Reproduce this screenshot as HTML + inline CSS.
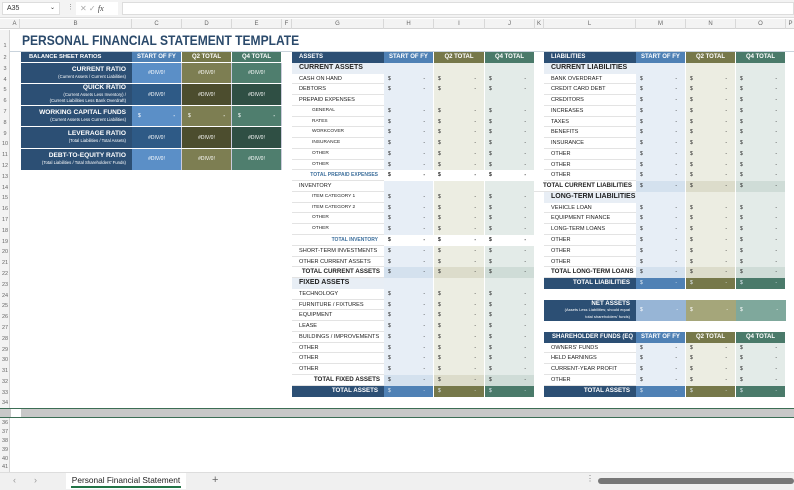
<!DOCTYPE html><html><head><meta charset="utf-8"><style>
*{margin:0;padding:0;box-sizing:border-box}
body{width:794px;height:490px;overflow:hidden;background:#fff;font-family:"Liberation Sans",sans-serif;position:relative}
q::before,q::after{content:none!important}
s{text-decoration:none}
.abs{position:absolute}
#top{left:0;top:0;width:794px;height:18px;background:#f3f3f3;border-bottom:1px solid #ddd}
#colh{left:0;top:19px;width:794px;height:10px;background:#f3f3f3;border-bottom:1px solid #d4d4d4}
#colh span{position:absolute;top:0;font-size:6px;color:#666;text-align:center;line-height:10px;border-right:1px solid #d8d8d8;height:10px}
#rowh{left:0;top:30px;width:10px;height:442px;background:#f3f3f3;border-right:1px solid #d4d4d4}
#rowh span{position:absolute;left:0;width:10px;font-size:5.5px;color:#666;text-align:center}
.title{left:22px;top:32px;font-size:14px;font-weight:bold;color:#2b4a6b;transform:scaleX(0.86);transform-origin:left top;white-space:nowrap}
.hl{left:10px;top:51px;width:784px;height:1px;background:#c9d3dc}
.pan{position:absolute;top:52px}
.r{display:flex;height:10.78px;font-size:5.6px;color:#222;line-height:10.78px}
.r>span{flex:none;padding-left:7px;white-space:nowrap;overflow:hidden;border-bottom:1px solid #e3e3e3}
.r>q{flex:none;display:flex;justify-content:space-between;padding:0 8px 0 4px;font-size:5px;border-right:1px solid #fff;quotes:none}
.r>q:nth-of-type(1){background:#e7eef6}.r>q:nth-of-type(2){background:#ecede2}.r>q:nth-of-type(3){background:#e3ebe8}
.h>span{background:#2c4f74;color:#fff;font-weight:bold;font-size:6px;border:0}
.h>q{color:#fff;font-weight:bold;font-size:6px;justify-content:center;padding:0}
.h>q:nth-of-type(1){background:#4f81b5}.h>q:nth-of-type(2){background:#76784a}.h>q:nth-of-type(3){background:#4a7a6a}
.sec>span{font-weight:bold;font-size:7px;background:#e8eef5;border:0}
.sub>span{padding-left:20px;font-size:4.8px}
.tp>span{color:#3d6f9c;font-weight:bold;font-size:5px;text-align:right;padding-right:6px}
.tp>q{background:#fff!important;font-weight:bold}
.tot>span{font-weight:bold;font-size:6.2px;text-align:right;padding-right:4px}
.tot>q:nth-of-type(1){background:#d4e1ee}.tot>q:nth-of-type(2){background:#dcdccb}.tot>q:nth-of-type(3){background:#cfdcd7}
.dk>span{background:#2c4f74;color:#fff;font-weight:bold;font-size:6.2px;text-align:right;padding-right:6px;border:0}
.dk>q{color:#dfe8f0}
.dk>q:nth-of-type(1){background:#4f81b5}.dk>q:nth-of-type(2){background:#76784a}.dk>q:nth-of-type(3){background:#4a7a6a}
.e{height:10.78px}
#rat{left:21px;top:52px;width:261px}
.rb{display:flex;height:21.56px;border-bottom:1px solid #fff}
.rb>span{width:111px;background:#2c4f74;color:#fff;text-align:right;padding-right:6px;font-size:6.6px;font-weight:bold;line-height:8px;padding-top:3px}
.rb>span i{display:block;font-style:normal;font-weight:normal;font-size:4.3px;line-height:6px}
.rb>q{width:50px;border-right:1px solid #ccd;color:#fff;font-size:5px;display:flex;align-items:center;justify-content:center;quotes:none}
.c1{background:#5b8fc7}.c2{background:#7d7e52}.c3{background:#4f7e6e}
.d1{background:#2e5a86}.d2{background:#4c4d2e}.d3{background:#2f4f44}
#ga .r>span{width:92px}#ga .r>q{width:50px}#ga .r>q:nth-of-type(2){width:51px}#la .r>span{width:92px}#la .r>q{width:50px}
</style></head><body>
<div id="top" class="abs">
 <div class="abs" style="left:2px;top:2px;width:58px;height:13px;background:#fff;border:1px solid #ddd;font-size:7px;line-height:11px;padding-left:4px;color:#333">A35<span style="position:absolute;right:4px;font-size:6px">&#8964;</span></div>
 <div class="abs" style="left:67px;top:3px;font-size:7px;color:#888">&#8942;</div>
 <div class="abs" style="left:76px;top:2px;width:42px;height:13px;background:#fff;font-size:8px;color:#aaa;line-height:13px;padding-left:4px">&#10005; &#10003; <i style="color:#444;font-family:'Liberation Serif',serif">fx</i></div>
 <div class="abs" style="left:122px;top:2px;width:672px;height:13px;background:#fff;border:1px solid #ddd"></div>
</div>
<div id="colh" class="abs">
<span style="left:10px;width:10px">A</span><span style="left:20px;width:112px">B</span><span style="left:132px;width:50px">C</span><span style="left:182px;width:50px">D</span><span style="left:232px;width:50px">E</span><span style="left:282px;width:10px">F</span><span style="left:292px;width:92px">G</span><span style="left:384px;width:50px">H</span><span style="left:434px;width:51px">I</span><span style="left:485px;width:50px">J</span><span style="left:535px;width:9px">K</span><span style="left:544px;width:92px">L</span><span style="left:636px;width:50px">M</span><span style="left:686px;width:50px">N</span><span style="left:736px;width:50px">O</span><span style="left:786px;width:10px">P</span>
</div>
<div id="rowh" class="abs">
<span style="top:13px">1</span><span style="top:25px">2</span><span style="top:36px">3</span><span style="top:47px">4</span><span style="top:57px">5</span><span style="top:68px">6</span><span style="top:79px">7</span><span style="top:90px">8</span><span style="top:101px">9</span><span style="top:111px">10</span><span style="top:122px">11</span><span style="top:133px">12</span><span style="top:144px">13</span><span style="top:155px">14</span><span style="top:165px">15</span><span style="top:176px">16</span><span style="top:187px">17</span><span style="top:198px">18</span><span style="top:209px">19</span><span style="top:219px">20</span><span style="top:230px">21</span><span style="top:241px">22</span><span style="top:252px">23</span><span style="top:263px">24</span><span style="top:273px">25</span><span style="top:284px">26</span><span style="top:295px">27</span><span style="top:306px">28</span><span style="top:317px">29</span><span style="top:327px">30</span><span style="top:338px">31</span><span style="top:349px">32</span><span style="top:360px">33</span><span style="top:370px">34</span><span style="top:380px;color:#217346">35</span><span style="top:390px">36</span><span style="top:399px">37</span><span style="top:408px">38</span><span style="top:417px">39</span><span style="top:426px">40</span><span style="top:434px">41</span>
</div>
<div class="abs title">PERSONAL FINANCIAL STATEMENT TEMPLATE</div>
<div class="abs hl"></div>

<div id="rat" class="abs">
 <div class="r h" style="border-bottom:1px solid #fff"><span style="width:111px;padding-left:8px;font-size:5.8px">BALANCE SHEET RATIOS</span><q style="width:50px">START OF FY</q><q style="width:50px">Q2 TOTAL</q><q style="width:50px">Q4 TOTAL</q></div>
 <div class="rb"><span>CURRENT RATIO<i>(Current Assets / Current Liabilities)</i></span><q class="c1">#DIV/0!</q><q class="c2">#DIV/0!</q><q class="c3">#DIV/0!</q></div>
 <div class="rb"><span style="padding-top:0">QUICK RATIO<i>(Current Assets Less Inventory) /</i><i>(Current Liabilities Less Bank Overdraft)</i></span><q class="d1">#DIV/0!</q><q class="d2">#DIV/0!</q><q class="d3">#DIV/0!</q></div>
 <div class="rb"><span>WORKING CAPITAL FUNDS<i>(Current Assets Less Current Liabilities)</i></span><q class="c1" style="justify-content:space-between;padding:0 6px">$<b>-</b></q><q class="c2" style="justify-content:space-between;padding:0 6px">$<b>-</b></q><q class="c3" style="justify-content:space-between;padding:0 6px">$<b>-</b></q></div>
 <div class="rb"><span>LEVERAGE RATIO<i>(Total Liabilities / Total Assets)</i></span><q class="d1">#DIV/0!</q><q class="d2">#DIV/0!</q><q class="d3">#DIV/0!</q></div>
 <div class="rb"><span>DEBT-TO-EQUITY RATIO<i>(Total Liabilities / Total Shareholders' Funds)</i></span><q class="c1">#DIV/0!</q><q class="c2">#DIV/0!</q><q class="c3">#DIV/0!</q></div>
</div>

<div id="ga" class="pan" style="left:292px;width:243px">
<div class="r h"><span>ASSETS</span><q>START OF FY</q><q>Q2 TOTAL</q><q>Q4 TOTAL</q></div>
<div class="r sec"><span>CURRENT ASSETS</span><q></q><q></q><q></q></div>
<div class="r"><span>CASH ON HAND</span><q>$<s>-</s></q><q>$<s>-</s></q><q>$<s>-</s></q></div>
<div class="r"><span>DEBTORS</span><q>$<s>-</s></q><q>$<s>-</s></q><q>$<s>-</s></q></div>
<div class="r"><span>PREPAID EXPENSES</span><q></q><q></q><q></q></div>
<div class="r sub"><span>GENERAL</span><q>$<s>-</s></q><q>$<s>-</s></q><q>$<s>-</s></q></div>
<div class="r sub"><span>RATES</span><q>$<s>-</s></q><q>$<s>-</s></q><q>$<s>-</s></q></div>
<div class="r sub"><span>WORKCOVER</span><q>$<s>-</s></q><q>$<s>-</s></q><q>$<s>-</s></q></div>
<div class="r sub"><span>INSURANCE</span><q>$<s>-</s></q><q>$<s>-</s></q><q>$<s>-</s></q></div>
<div class="r sub"><span>OTHER</span><q>$<s>-</s></q><q>$<s>-</s></q><q>$<s>-</s></q></div>
<div class="r sub"><span>OTHER</span><q>$<s>-</s></q><q>$<s>-</s></q><q>$<s>-</s></q></div>
<div class="r tp"><span>TOTAL PREPAID EXPENSES</span><q>$<s>-</s></q><q>$<s>-</s></q><q>$<s>-</s></q></div>
<div class="r"><span>INVENTORY</span><q></q><q></q><q></q></div>
<div class="r sub"><span>ITEM CATEGORY 1</span><q>$<s>-</s></q><q>$<s>-</s></q><q>$<s>-</s></q></div>
<div class="r sub"><span>ITEM CATEGORY 2</span><q>$<s>-</s></q><q>$<s>-</s></q><q>$<s>-</s></q></div>
<div class="r sub"><span>OTHER</span><q>$<s>-</s></q><q>$<s>-</s></q><q>$<s>-</s></q></div>
<div class="r sub"><span>OTHER</span><q>$<s>-</s></q><q>$<s>-</s></q><q>$<s>-</s></q></div>
<div class="r tp"><span>TOTAL INVENTORY</span><q>$<s>-</s></q><q>$<s>-</s></q><q>$<s>-</s></q></div>
<div class="r"><span>SHORT-TERM INVESTMENTS</span><q>$<s>-</s></q><q>$<s>-</s></q><q>$<s>-</s></q></div>
<div class="r"><span>OTHER CURRENT ASSETS</span><q>$<s>-</s></q><q>$<s>-</s></q><q>$<s>-</s></q></div>
<div class="r tot"><span>TOTAL CURRENT ASSETS</span><q>$<s>-</s></q><q>$<s>-</s></q><q>$<s>-</s></q></div>
<div class="r sec"><span>FIXED ASSETS</span><q></q><q></q><q></q></div>
<div class="r"><span>TECHNOLOGY</span><q>$<s>-</s></q><q>$<s>-</s></q><q>$<s>-</s></q></div>
<div class="r"><span>FURNITURE / FIXTURES</span><q>$<s>-</s></q><q>$<s>-</s></q><q>$<s>-</s></q></div>
<div class="r"><span>EQUIPMENT</span><q>$<s>-</s></q><q>$<s>-</s></q><q>$<s>-</s></q></div>
<div class="r"><span>LEASE</span><q>$<s>-</s></q><q>$<s>-</s></q><q>$<s>-</s></q></div>
<div class="r"><span>BUILDINGS / IMPROVEMENTS</span><q>$<s>-</s></q><q>$<s>-</s></q><q>$<s>-</s></q></div>
<div class="r"><span>OTHER</span><q>$<s>-</s></q><q>$<s>-</s></q><q>$<s>-</s></q></div>
<div class="r"><span>OTHER</span><q>$<s>-</s></q><q>$<s>-</s></q><q>$<s>-</s></q></div>
<div class="r"><span>OTHER</span><q>$<s>-</s></q><q>$<s>-</s></q><q>$<s>-</s></q></div>
<div class="r tot"><span>TOTAL FIXED ASSETS</span><q>$<s>-</s></q><q>$<s>-</s></q><q>$<s>-</s></q></div>
<div class="r dk"><span>TOTAL ASSETS</span><q>$<s>-</s></q><q>$<s>-</s></q><q>$<s>-</s></q></div>
</div>

<div id="la" class="pan" style="left:544px;width:242px">
<div class="r h"><span>LIABILITIES</span><q>START OF FY</q><q>Q2 TOTAL</q><q>Q4 TOTAL</q></div>
<div class="r sec"><span>CURRENT LIABILITIES</span><q></q><q></q><q></q></div>
<div class="r"><span>BANK OVERDRAFT</span><q>$<s>-</s></q><q>$<s>-</s></q><q>$<s>-</s></q></div>
<div class="r"><span>CREDIT CARD DEBT</span><q>$<s>-</s></q><q>$<s>-</s></q><q>$<s>-</s></q></div>
<div class="r"><span>CREDITORS</span><q>$<s>-</s></q><q>$<s>-</s></q><q>$<s>-</s></q></div>
<div class="r"><span>INCREASES</span><q>$<s>-</s></q><q>$<s>-</s></q><q>$<s>-</s></q></div>
<div class="r"><span>TAXES</span><q>$<s>-</s></q><q>$<s>-</s></q><q>$<s>-</s></q></div>
<div class="r"><span>BENEFITS</span><q>$<s>-</s></q><q>$<s>-</s></q><q>$<s>-</s></q></div>
<div class="r"><span>INSURANCE</span><q>$<s>-</s></q><q>$<s>-</s></q><q>$<s>-</s></q></div>
<div class="r"><span>OTHER</span><q>$<s>-</s></q><q>$<s>-</s></q><q>$<s>-</s></q></div>
<div class="r"><span>OTHER</span><q>$<s>-</s></q><q>$<s>-</s></q><q>$<s>-</s></q></div>
<div class="r"><span>OTHER</span><q>$<s>-</s></q><q>$<s>-</s></q><q>$<s>-</s></q></div>
<div class="r tot"><span style="overflow:visible;margin-left:-10px;width:102px!important">TOTAL CURRENT LIABILITIES</span><q>$<s>-</s></q><q>$<s>-</s></q><q>$<s>-</s></q></div>
<div class="r sec"><span>LONG-TERM LIABILITIES</span><q></q><q></q><q></q></div>
<div class="r"><span>VEHICLE LOAN</span><q>$<s>-</s></q><q>$<s>-</s></q><q>$<s>-</s></q></div>
<div class="r"><span>EQUIPMENT FINANCE</span><q>$<s>-</s></q><q>$<s>-</s></q><q>$<s>-</s></q></div>
<div class="r"><span>LONG-TERM LOANS</span><q>$<s>-</s></q><q>$<s>-</s></q><q>$<s>-</s></q></div>
<div class="r"><span>OTHER</span><q>$<s>-</s></q><q>$<s>-</s></q><q>$<s>-</s></q></div>
<div class="r"><span>OTHER</span><q>$<s>-</s></q><q>$<s>-</s></q><q>$<s>-</s></q></div>
<div class="r"><span>OTHER</span><q>$<s>-</s></q><q>$<s>-</s></q><q>$<s>-</s></q></div>
<div class="r tot"><span>TOTAL LONG-TERM LOANS</span><q>$<s>-</s></q><q>$<s>-</s></q><q>$<s>-</s></q></div>
<div class="r dk"><span>TOTAL LIABILITIES</span><q>$<s>-</s></q><q>$<s>-</s></q><q>$<s>-</s></q></div>
<div class="e"></div>
<div style="display:flex;height:21.56px;font-size:5px;color:#fff">
 <div style="width:92px;background:#2c4f74;text-align:right;padding-right:6px;line-height:6.5px;padding-top:1px"><b style="font-size:6.2px">NET ASSETS</b><br><span style="font-size:4px">(Assets Less Liabilities; should equal<br>total shareholders' funds)</span></div>
 <div style="width:50px;background:#97b5d6;display:flex;justify-content:space-between;align-items:center;padding:0 8px 0 4px">$<s>-</s></div>
 <div style="width:50px;background:#a5a67a;display:flex;justify-content:space-between;align-items:center;padding:0 8px 0 4px">$<s>-</s></div>
 <div style="width:50px;background:#7fa89c;display:flex;justify-content:space-between;align-items:center;padding:0 8px 0 4px">$<s>-</s></div>
</div>
<div class="e"></div>
<div class="r h"><span style="padding-left:8px">SHAREHOLDER FUNDS (EQ</span><q>START OF FY</q><q>Q2 TOTAL</q><q>Q4 TOTAL</q></div>
<div class="r"><span>OWNERS' FUNDS</span><q>$<s>-</s></q><q>$<s>-</s></q><q>$<s>-</s></q></div>
<div class="r"><span>HELD EARNINGS</span><q>$<s>-</s></q><q>$<s>-</s></q><q>$<s>-</s></q></div>
<div class="r"><span>CURRENT-YEAR PROFIT</span><q>$<s>-</s></q><q>$<s>-</s></q><q>$<s>-</s></q></div>
<div class="r"><span>OTHER</span><q>$<s>-</s></q><q>$<s>-</s></q><q>$<s>-</s></q></div>
<div class="r dk"><span>TOTAL ASSETS</span><q>$<s>-</s></q><q>$<s>-</s></q><q>$<s>-</s></q></div>
</div>

<div class="abs" style="left:0;top:408px;width:794px;height:10px;background:#c8c8c8;border-top:1px solid #3c6e55;border-bottom:1px solid #3c6e55"></div>
<div class="abs" style="left:11px;top:409px;width:10px;height:8px;background:#fff"></div>
<div class="abs" style="left:0;top:472px;width:794px;height:18px;background:#f0f0f0;border-top:1px solid #ddd"></div>
<div class="abs" style="left:13px;top:475px;font-size:9px;color:#999">&lsaquo;</div>
<div class="abs" style="left:34px;top:475px;font-size:9px;color:#999">&rsaquo;</div>
<div class="abs" style="left:66px;top:473px;width:120px;height:16px;background:#fff;font-size:8.3px;color:#222;text-align:center;line-height:14px">Personal Financial Statement<div style="position:absolute;left:5px;right:5px;bottom:1px;height:2px;background:#217346"></div></div>
<div class="abs" style="left:212px;top:474px;font-size:11px;color:#666">+</div>
<div class="abs" style="left:586px;top:474px;font-size:8px;color:#777">&#8942;</div>
<div class="abs" style="left:598px;top:478px;width:196px;height:6px;background:#777;border-radius:3px"></div>
</body></html>
